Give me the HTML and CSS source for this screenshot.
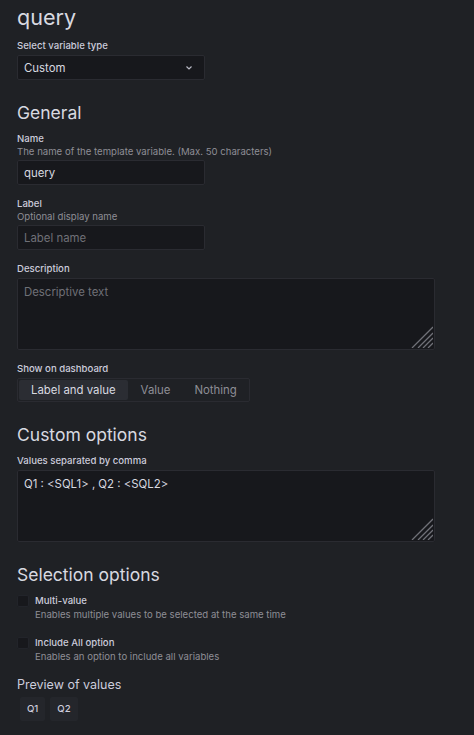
FILE: index.html
```html
<!DOCTYPE html>
<html lang="en">
<head>
    <meta charset="UTF-8">
    <meta name="viewport" content="width=device-width, initial-scale=1.0">
    <title>Variable</title>
    <link rel="stylesheet" href="styles.css">
</head>
<body>
    <div class="page">
        <h1 class="title">query</h1>

        <div class="field">
            <label class="label">Select variable type</label>
            <div class="select">
                <span>Custom</span>
                <svg class="chevron" width="8" height="6" viewBox="0 0 8 6"><path d="M1.5 1.5 L4 4 L6.5 1.5" fill="none" stroke="#b8b9c4" stroke-width="1.2"/></svg>
            </div>
        </div>

        <h2 class="section">General</h2>

        <div class="field">
            <label class="label">Name</label>
            <div class="desc">The name of the template variable. (Max. 50 characters)</div>
            <input class="input" type="text" value="query">
        </div>

        <div class="field">
            <label class="label">Label</label>
            <div class="desc">Optional display name</div>
            <input class="input" type="text" placeholder="Label name">
        </div>

        <div class="field">
            <label class="label">Description</label>
            <div class="area-wrap">
                <textarea class="area" placeholder="Descriptive text"></textarea>
                <svg class="grip" width="22" height="22" viewBox="0 0 22 22"><path d="M1 22 L22 1 M7 22 L22 7 M12 22 L22 12 M17 22 L22 17" stroke="#707178" stroke-width="1.3"/></svg>
            </div>
        </div>

        <div class="field">
            <label class="label">Show on dashboard</label>
            <div class="radio-group">
                <span class="radio active">Label and value</span>
                <span class="radio">Value</span>
                <span class="radio">Nothing</span>
            </div>
        </div>

        <h2 class="section">Custom options</h2>

        <div class="field">
            <label class="label">Values separated by comma</label>
            <div class="area-wrap">
                <textarea class="area">Q1 : &lt;SQL1&gt; , Q2 : &lt;SQL2&gt;</textarea>
                <svg class="grip" width="22" height="22" viewBox="0 0 22 22"><path d="M1 22 L22 1 M7 22 L22 7 M12 22 L22 12 M17 22 L22 17" stroke="#707178" stroke-width="1.3"/></svg>
            </div>
        </div>

        <h2 class="section">Selection options</h2>

        <div class="check-row">
            <span class="box"></span>
            <div>
                <div class="check-label">Multi-value</div>
                <div class="desc">Enables multiple values to be selected at the same time</div>
            </div>
        </div>
        <div class="check-row">
            <span class="box"></span>
            <div>
                <div class="check-label">Include All option</div>
                <div class="desc">Enables an option to include all variables</div>
            </div>
        </div>

        <h3 class="preview-title">Preview of values</h3>
        <div class="chips">
            <span class="chip">Q1</span>
            <span class="chip">Q2</span>
        </div>
    </div>
</body>
</html>
```

FILE: styles.css
```css
body {
    margin: 0;
    background-color: #1f2125;
    color: #ccccdc;
    font-family: Inter, 'Noto Sans', sans-serif;
}
.page {
    padding: 0 17px;
}
.title {
    margin: 0;
    padding-top: 3px;
    font-size: 21.6px;
    font-weight: 400;
    line-height: 28px;
    color: #d8d9e0;
}
.section {
    margin: 21px 0 0;
    font-size: 17.5px;
    font-weight: 400;
    line-height: 24px;
    color: #d8d9e0;
}
.field {
    margin-top: 13px;
}
.title + .field {
    margin-top: 9px;
}
.section + .field {
    margin-top: 8px;
}
.label {
    display: block;
    font-size: 9.6px;
    font-weight: 500;
    line-height: 12px;
    margin-bottom: 3px;
    color: #ccccdc;
}
.desc {
    font-size: 9.6px;
    line-height: 12px;
    color: #8e8e95;
    margin-top: -2px;
    margin-bottom: 2px;
}
.select, .input {
    box-sizing: border-box;
    width: 188px;
    height: 25px;
    background: #17181c;
    border: 1px solid #2a2b31;
    border-radius: 2px;
    display: flex;
    align-items: center;
    justify-content: space-between;
    padding: 0 6px;
    font-family: inherit;
    font-size: 11.4px;
    color: #d8d9e0;
    outline: none;
}
.input::placeholder, .area::placeholder {
    color: #6f7077;
}
.chevron {
    margin-right: 5px;
}
.area-wrap {
    position: relative;
    width: 418px;
}
.area {
    display: block;
    box-sizing: border-box;
    width: 418px;
    height: 72px;
    background: #17181c;
    border: 1px solid #2a2b31;
    border-radius: 2px;
    padding: 5px 6px;
    font-family: inherit;
    font-size: 11.4px;
    line-height: 16px;
    color: #d8d9e0;
    resize: none;
    outline: none;
}
.grip {
    position: absolute;
    right: 2px;
    bottom: 2px;
}
.radio-group {
    display: inline-flex;
    padding: 1px;
    border: 1px solid #2a2b31;
    border-radius: 2px;
    gap: 2px;
}
.radio {
    font-size: 11.4px;
    line-height: 18px;
    padding: 1px 11px;
    color: #8e8e95;
}
.radio.active {
    background: #2b2d33;
    color: #d8d9e0;
    border-radius: 2px;
    padding: 1px 12px;
}
.check-row {
    display: flex;
    gap: 6px;
    margin-top: 8px;
}
.check-row + .check-row {
    margin-top: 14px;
}
.box {
    width: 12px;
    height: 12px;
    background: #17181c;
    border: 1px solid #22242a;
    border-radius: 2px;
    box-sizing: border-box;
    flex-shrink: 0;
}
.check-label {
    font-size: 9.6px;
    font-weight: 500;
    line-height: 12px;
    margin-bottom: 3px;
}
.check-label + .desc {
    margin-top: -1px;
}
.preview-title {
    margin: 12px 0 4px;
    font-size: 12.5px;
    font-weight: 400;
    line-height: 16px;
    color: #ccccdc;
}
.chips {
    display: flex;
    gap: 5px;
    padding-left: 3px;
}
.chip {
    background: #24262b;
    font-size: 9.6px;
    font-weight: 500;
    line-height: 24px;
    padding: 0 7px;
    border-radius: 2px;
}
```
